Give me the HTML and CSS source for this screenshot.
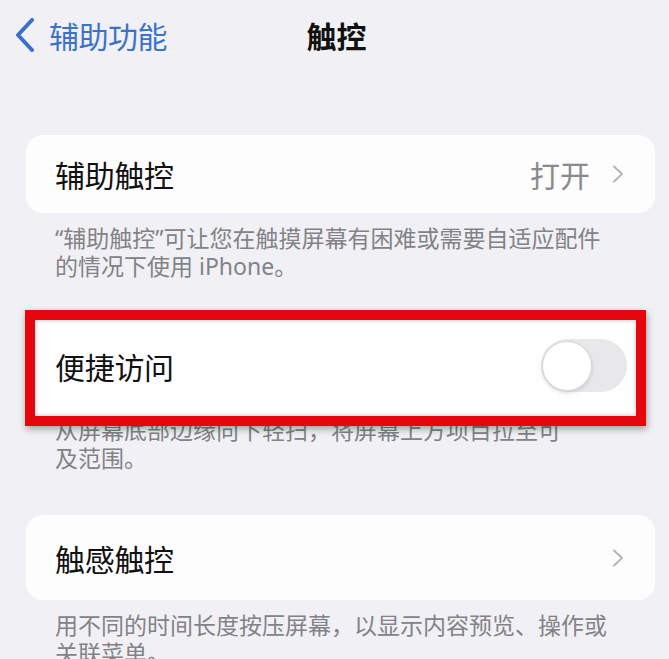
FILE: index.html
```html
<!DOCTYPE html>
<html lang="zh-CN">
<head>
<meta charset="utf-8">
<title>触控</title>
<link rel="stylesheet" href="styles.css">
</head>
<body>
<div class="screen">
  <header class="nav">
    <a class="back">
      <svg class="back-icon" width="20" height="34" viewBox="0 0 20 34"><path d="M17 2 L3 17 L17 32" fill="none" stroke="#3a6fd0" stroke-width="4" stroke-linecap="round" stroke-linejoin="round"/></svg>
      <span class="back-label">辅助功能</span>
    </a>
    <h1 class="title">触控</h1>
    <span class="nav-spacer"></span>
  </header>

  <section class="group first">
    <div class="card">
      <span class="label">辅助触控</span>
      <span class="value">打开</span>
      <svg class="chev" width="13" height="18" viewBox="0 0 13 18"><path d="M2 1.5 L10 9 L2 16.5" fill="none" stroke="#b4b4b9" stroke-width="2" stroke-linecap="round" stroke-linejoin="round"/></svg>
    </div>
    <p class="note">“辅助触控”可让您在触摸屏幕有困难或需要自适应配件的情况下使用 iPhone。</p>
  </section>

  <section class="group second">
    <div class="card marked">
      <span class="label">便捷访问</span>
      <span class="toggle"><span class="knob"></span></span>
    </div>
    <p class="note under-mark">从屏幕底部边缘向下轻扫，将屏幕上方项目拉至可<br>及范围。</p>
  </section>

  <section class="group third">
    <div class="card tall">
      <span class="label">触感触控</span>
      <svg class="chev" width="13" height="18" viewBox="0 0 13 18"><path d="M2 1.5 L10 9 L2 16.5" fill="none" stroke="#b4b4b9" stroke-width="2" stroke-linecap="round" stroke-linejoin="round"/></svg>
    </div>
    <p class="note">用不同的时间长度按压屏幕，以显示内容预览、操作或关联菜单。</p>
  </section>
</div>
</body>
</html>
```

FILE: styles.css
```css
* { box-sizing: border-box; }
html, body {
  margin: 0;
  padding: 0;
  background: #f1f1f5;
}
body {
  font-family: "Noto Sans CJK SC", "Noto Sans", sans-serif;
  color: #111;
  width: 669px;
  height: 659px;
  overflow: hidden;
}
.screen {
  display: flex;
  flex-direction: column;
}
.nav {
  height: 70px;
  display: grid;
  grid-template-columns: 1fr auto 1fr;
  align-items: center;
  padding: 0 15px;
}
.back {
  display: flex;
  align-items: center;
  gap: 14px;
  color: #3d72c9;
}
.back-icon { display: block; margin-top: -1px; }
.back-label {
  font-size: 30px;
  line-height: 40px;
  letter-spacing: -0.5px;
}
.title {
  margin: 0 0 0 4px;
  font-size: 30px;
  line-height: 40px;
  font-weight: 700;
  color: #111;
}
.group {
  display: flex;
  flex-direction: column;
}
.group.first { margin-top: 65px; }
.group.second { margin-top: 30px; }
.group.third { margin-top: 43px; }
.card {
  margin: 0 14px 0 26px;
  height: 78px;
  background: #fdfdfd;
  border-radius: 17px;
  display: flex;
  align-items: center;
  padding: 0 30px 0 29px;
}
.card.tall { height: 85px; }
.label {
  font-size: 30px;
  line-height: 40px;
  flex: 1;
  letter-spacing: -0.3px;
}
.value {
  font-size: 30px;
  line-height: 40px;
  color: #8a8a8e;
  margin-right: 22px;
}
.chev { display: block; }
.note {
  margin: 0;
  padding: 11px 58px 0 55px;
  font-size: 23px;
  line-height: 28px;
  color: #828287;
  font-family: "Noto Sans", "Noto Sans CJK SC", sans-serif;
}
.card.marked {
  margin: 0 23px 0 25px;
  height: 116px;
  border: 10px solid #e6070c;
  border-radius: 0;
  padding: 0 9px 5px 20px;
  background: #fefefe;
  position: relative;
  z-index: 1;
  box-shadow: 1px 3px 7px rgba(0,0,0,0.35), inset 0 0 4px rgba(0,0,0,0.25);
}
.note.under-mark {
  margin-top: -10px;
  padding-top: 0;
}
.toggle {
  width: 86px;
  height: 53px;
  border-radius: 27px;
  background: #e8e8ea;
  display: flex;
  align-items: center;
  padding-left: 1px;
}
.knob {
  width: 50px;
  height: 50px;
  border-radius: 50%;
  background: #fff;
  border: 1px solid #d8d8dc;
  box-shadow: 0 2px 4px rgba(0,0,0,0.12);
}
```
